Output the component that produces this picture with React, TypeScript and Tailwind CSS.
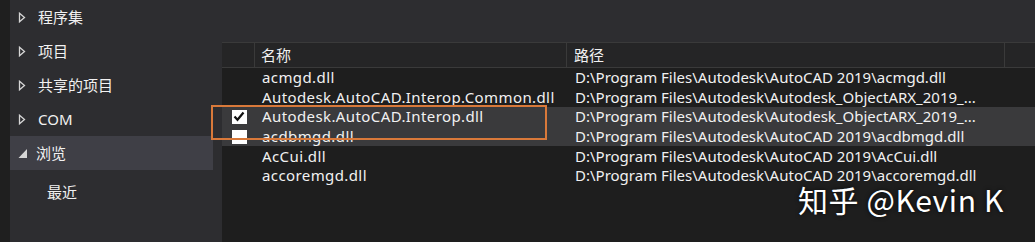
import React from "react";

const font = { fontFamily: '"Noto Sans", "Noto Sans CJK SC", sans-serif' };

const navItems = [
  { label: "程序集" },
  { label: "项目" },
  { label: "共享的项目" },
  { label: "COM" },
];

const rows = [
  { name: "acmgd.dll", path: "D:\\Program Files\\Autodesk\\AutoCAD 2019\\acmgd.dll" },
  { name: "Autodesk.AutoCAD.Interop.Common.dll", path: "D:\\Program Files\\Autodesk\\Autodesk_ObjectARX_2019_..." },
  { name: "Autodesk.AutoCAD.Interop.dll", path: "D:\\Program Files\\Autodesk\\Autodesk_ObjectARX_2019_...", checked: true, hl: true },
  { name: "acdbmgd.dll", path: "D:\\Program Files\\Autodesk\\AutoCAD 2019\\acdbmgd.dll", box: true, hl: true },
  { name: "AcCui.dll", path: "D:\\Program Files\\Autodesk\\AutoCAD 2019\\AcCui.dll" },
  { name: "accoremgd.dll", path: "D:\\Program Files\\Autodesk\\AutoCAD 2019\\accoremgd.dll" },
];

function Caret() {
  return (
    <svg width="8" height="11" viewBox="0 0 8 11" className="shrink-0">
      <path d="M1.5 1.2 L6.5 5.5 L1.5 9.8 Z" fill="none" stroke="#d6d6d6" strokeWidth="1.3" />
    </svg>
  );
}

function Expanded() {
  return (
    <svg width="10" height="11" viewBox="0 0 10 11" className="shrink-0">
      <path d="M9 1 L9 10 L0.5 10 Z" fill="#d6d6d6" />
    </svg>
  );
}

export default function App() {
  return (
    <div className="relative flex h-[242px] w-[1035px] overflow-hidden bg-[#2d2d30] text-[15px] text-[#f1f1f1]" style={font}>
      <div className="w-[10px] shrink-0 bg-[#1f1f1f]" />
      <aside className="flex w-[212px] shrink-0 flex-col pr-[9px]">
        {navItems.map((item) => (
          <div key={item.label} className="flex h-[34px] items-center gap-[12px] pl-[8px]">
            <Caret />
            <span>{item.label}</span>
          </div>
        ))}
        <div className="flex h-[34px] items-center gap-[8px] bg-[#3f3f46] pl-[8px]">
          <Expanded />
          <span>浏览</span>
        </div>
        <div className="mt-[5px] flex h-[34px] items-center pl-[37px]">最近</div>
      </aside>
      <main className="mt-[42px] flex-1 bg-[#1e1e1e]">
        <div className="flex h-[26px] border-y border-[#3a3a3a] bg-[#252526]">
          <div className="w-[33px] border-r border-[#3a3a3a]" />
          <div className="flex w-[312px] items-center border-r border-[#3a3a3a] pl-[6px]">名称</div>
          <div className="flex w-[438px] items-center border-r border-[#3a3a3a] pl-[7px]">路径</div>
          <div className="flex-1" />
        </div>
        {rows.map((r) => (
          <div key={r.name} className={`flex h-[19.6px] items-center leading-none ${r.hl ? "bg-[#3a3a3c]" : ""}`}>
            <div className="flex w-[33px] justify-center pl-[1px]">
              {r.checked ? (
                <div className="flex h-[14px] w-[15px] items-center justify-center bg-white">
                  <svg width="12" height="11" viewBox="0 0 12 11">
                    <path d="M1.5 5.5 L4.5 8.8 L10.5 1.5" fill="none" stroke="#111" strokeWidth="2.2" />
                  </svg>
                </div>
              ) : r.box ? (
                <div className="h-[14px] w-[15px] bg-white" />
              ) : null}
            </div>
            <div className="w-[312px] whitespace-nowrap pl-[7px] tracking-[0.4px]">{r.name}</div>
            <div className="w-[438px] whitespace-nowrap pl-[8px]">{r.path}</div>
          </div>
        ))}
      </main>
      <div className="pointer-events-none absolute left-[211px] top-[105px] h-[35px] w-[336px] border-2 border-[#d9793a]" />
      <div className="pointer-events-none absolute left-[798px] top-[177px] text-[30px] tracking-[0.6px] text-white [text-shadow:0_0_4px_rgba(0,0,0,0.8)]" style={{ fontFamily: '"Noto Sans CJK SC", "Noto Sans", sans-serif' }}>
        知乎 @Kevin K
      </div>
    </div>
  );
}
